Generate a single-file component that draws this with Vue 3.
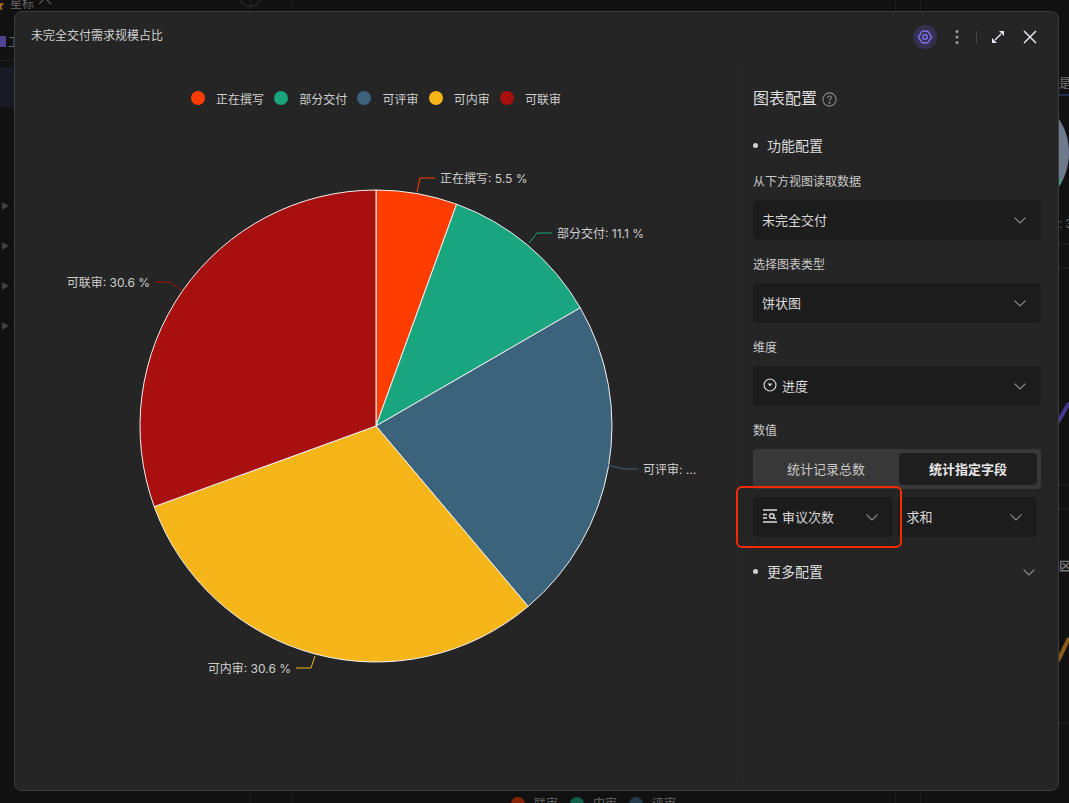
<script setup>
import { computed } from 'vue'

const cx = 376
const cy = 426
const r = 236

const slices = [
    { name: '正在撰写', pct: 5.55, color: '#ff3d00' },
    { name: '部分交付', pct: 11.1, color: '#19a67f' },
    { name: '可评审', pct: 22.2, color: '#3b637c' },
    { name: '可内审', pct: 30.6, color: '#f6b518' },
    { name: '可联审', pct: 30.55, color: '#a81010' }
]

const labels = [
    { text: '正在撰写: 5.5 %', x: 440, y: 178, anchor: 'start', line: '417,192 420,178 435,178', color: '#ff3d00' },
    { text: '部分交付: 11.1 %', x: 557, y: 233, anchor: 'start', line: '529,243 537,233 552,233', color: '#19a67f' },
    { text: '可评审: ...', x: 643, y: 469, anchor: 'start', line: '608,465 623,469 638,469', color: '#3b637c' },
    { text: '可内审: 30.6 %', x: 291, y: 668, anchor: 'end', line: '315,656 311,668 296,668', color: '#f6b518' },
    { text: '可联审: 30.6 %', x: 150, y: 282, anchor: 'end', line: '181,290 170,282 155,282', color: '#a81010' }
]

const paths = computed(() => {
    let acc = 0
    return slices.map((s) => {
        const a0 = (acc / 100) * Math.PI * 2
        acc += s.pct
        const a1 = (acc / 100) * Math.PI * 2
        const x0 = cx + r * Math.sin(a0)
        const y0 = cy - r * Math.cos(a0)
        const x1 = cx + r * Math.sin(a1)
        const y1 = cy - r * Math.cos(a1)
        const large = s.pct > 50 ? 1 : 0
        return {
            color: s.color,
            d: `M${cx} ${cy}L${x0.toFixed(2)} ${y0.toFixed(2)}A${r} ${r} 0 ${large} 1 ${x1.toFixed(2)} ${y1.toFixed(2)}Z`
        }
    })
})
</script>

<template>
    <div class="page">
        <!-- 弹窗后面露出的页面 -->
        <div class="backdrop">
            <div class="bg-star">★</div>
            <div class="bg-title">星标</div>
            <svg class="bg-up" width="14" height="10" viewBox="0 0 14 10"><path d="M1 7l6-6 6 6" fill="none" stroke="#555" stroke-width="1.3" /></svg>
            <div class="bg-tag"></div>
            <div class="bg-tag-text">工</div>
            <div class="bg-active"></div>
            <div class="bg-rule bg-rule-top"></div>
            <i class="bg-tri" v-for="t in [207, 247, 287, 327]" :key="t" :style="{ top: t - 5 + 'px' }"></i>
            <div class="bg-vline" style="left: 250px"></div>
            <div class="bg-vline" style="left: 291px"></div>
            <div class="bg-vline" style="left: 895px"></div>
            <div class="bg-vline" style="left: 920px"></div>
            <div class="bg-circle"></div>
            <div class="bg-legend">
                <span><i style="background: #8a2408"></i>联审</span>
                <span><i style="background: #12614c"></i>中审</span>
                <span><i style="background: #243b4b"></i>评审</span>
            </div>
            <svg class="bg-right" width="11" height="803" viewBox="0 0 11 803">
                <path d="M0 118C7 127 11 140 11 152C11 166 7 178 0 188Z" fill="#6f7a8c" />
                <path d="M0 188L4.5 180L0 177Z" fill="#3f9c80" />
                <path d="M0 95H11" stroke="#2c4a86" />
                <path d="M0 244H11M0 268H11M0 485H11M0 509H11M0 723H11" stroke="#222" />
                <path d="M0 422L11 403" stroke="#47368f" stroke-width="4" />
                <path d="M0 661L11 638" stroke="#8a5a16" stroke-width="4" />
            </svg>
            <div class="bg-side bg-side-a">是</div>
            <div class="bg-side bg-side-b">: 3</div>
            <div class="bg-side bg-side-c">区</div>
        </div>

        <div class="modal">
            <header class="modal-header">
                <span class="modal-title">未完全交付需求规模占比</span>
                <div class="header-tools">
                    <span class="ai-btn">
                        <svg width="16" height="16" viewBox="0 0 16 16" fill="none" stroke="#8070f0" stroke-width="1.4">
                            <path d="M5.2 2.2h5.6L14.6 8l-3.8 5.8H5.2L1.4 8Z" stroke-linejoin="round" />
                            <circle cx="8" cy="8" r="2.3" />
                        </svg>
                    </span>
                    <svg class="more" width="4" height="16" viewBox="0 0 4 16" fill="#9a9a9a">
                        <circle cx="2" cy="2.6" r="1.5" />
                        <circle cx="2" cy="8" r="1.5" />
                        <circle cx="2" cy="13.4" r="1.5" />
                    </svg>
                    <span class="tool-sep"></span>
                    <svg class="expand" width="12" height="12" viewBox="0 0 12 12" fill="#e4e4ec" stroke="#e4e4ec">
                        <path d="M7 0h5v5z" stroke="none" />
                        <path d="M0 7v5h5z" stroke="none" />
                        <path d="M9 3L3 9" stroke-width="1.5" />
                    </svg>
                    <svg class="close" width="14" height="14" viewBox="0 0 14 14" fill="none" stroke="#e4e4ec" stroke-width="1.5">
                        <path d="M1 1l12 12M13 1L1 13" />
                    </svg>
                </div>
            </header>

            <div class="modal-body">
                <section class="chart-col">
                    <div class="legend">
                        <div class="legend-item" v-for="s in slices" :key="s.name">
                            <i :style="{ background: s.color }"></i>
                            <span>{{ s.name }}</span>
                        </div>
                    </div>
                    <svg class="pie" width="722" height="670" viewBox="15 108 722 670">
                        <path v-for="p in paths" :key="p.color" :d="p.d" :fill="p.color" stroke="#f2f2f2" stroke-width="1" stroke-linejoin="round" />
                        <g v-for="l in labels" :key="l.text">
                            <polyline :points="l.line" fill="none" :stroke="l.color" stroke-width="1" />
                            <text :x="l.x" :y="l.y + 4.5" :text-anchor="l.anchor" class="pie-label">{{ l.text }}</text>
                        </g>
                    </svg>
                </section>

                <aside class="config">
                    <h3 class="config-title">
                        图表配置
                        <svg width="15" height="15" viewBox="0 0 14 14" fill="none" stroke="#8c8c8c" stroke-width="1">
                            <circle cx="7" cy="7" r="6.2" />
                            <path d="M5.2 5.6C5.2 4.5 6 3.8 7 3.8s1.8.7 1.8 1.6C8.8 6.6 7 6.6 7 8.2" />
                            <circle cx="7" cy="10" r=".5" fill="#8c8c8c" />
                        </svg>
                    </h3>

                    <div class="section-head"><i class="dot"></i>功能配置</div>

                    <label class="field-label">从下方视图读取数据</label>
                    <div class="select">
                        <span>未完全交付</span>
                        <svg class="chev" width="12" height="7" viewBox="0 0 12 7"><path d="M.6.6L6 6 11.4.6" /></svg>
                    </div>

                    <label class="field-label">选择图表类型</label>
                    <div class="select">
                        <span>饼状图</span>
                        <svg class="chev" width="12" height="7" viewBox="0 0 12 7"><path d="M.6.6L6 6 11.4.6" /></svg>
                    </div>

                    <label class="field-label">维度</label>
                    <div class="select">
                        <span class="with-icon">
                            <svg width="14" height="14" viewBox="0 0 15 15" fill="none" stroke="#dcdcdc" stroke-width="1.2">
                                <circle cx="7.5" cy="7.5" r="6.4" />
                                <path d="M5 6h5L7.5 9.2z" fill="#dcdcdc" stroke="none" />
                            </svg>
                            进度
                        </span>
                        <svg class="chev" width="12" height="7" viewBox="0 0 12 7"><path d="M.6.6L6 6 11.4.6" /></svg>
                    </div>

                    <label class="field-label">数值</label>
                    <div class="tabs">
                        <span class="tab">统计记录总数</span>
                        <span class="tab active">统计指定字段</span>
                    </div>
                    <div class="value-row">
                        <div class="select small">
                            <span class="with-icon">
                                <svg width="14" height="14" viewBox="0 0 14 14" fill="none" stroke="#dcdcdc" stroke-width="1.4">
                                    <path d="M0 1h14M0 13h14M0 5.5h4M0 9h4" />
                                    <circle cx="8.8" cy="7" r="2.3" />
                                    <path d="M10.5 8.6l2.5 1.6" />
                                </svg>
                                审议次数
                            </span>
                            <svg class="chev" width="12" height="7" viewBox="0 0 12 7"><path d="M.6.6L6 6 11.4.6" /></svg>
                        </div>
                        <div class="select small second">
                            <span>求和</span>
                            <svg class="chev" width="12" height="7" viewBox="0 0 12 7"><path d="M.6.6L6 6 11.4.6" /></svg>
                        </div>
                        <div class="highlight"></div>
                    </div>

                    <div class="section-head more-head">
                        <span class="more-left"><i class="dot"></i>更多配置</span>
                        <svg class="chev" width="12" height="7" viewBox="0 0 12 7"><path d="M.6.6L6 6 11.4.6" /></svg>
                    </div>
                </aside>
            </div>
        </div>
    </div>
</template>

<style scoped>
.page {
    position: relative;
    width: 1069px;
    height: 803px;
    overflow: hidden;
    background: #111111;
    font-family: "Liberation Sans", "Noto Sans CJK SC", sans-serif;
}

.backdrop {
    position: absolute;
    inset: 0;
    color: #6a6a6a;
    font-size: 12px;
}

.bg-star {
    position: absolute;
    left: -8px;
    top: -6px;
    color: #b07a1a;
    font-size: 13px;
}

.bg-title {
    position: absolute;
    left: 10px;
    top: -6px;
    color: #666;
}

.bg-up {
    position: absolute;
    left: 38px;
    top: -3px;
}

.bg-tag {
    position: absolute;
    left: 0;
    top: 36px;
    width: 6px;
    height: 11px;
    background: #4f4391;
}

.bg-tag-text {
    position: absolute;
    left: 8px;
    top: 33px;
    color: #666;
}

.bg-active {
    position: absolute;
    left: 0;
    top: 67px;
    width: 14px;
    height: 40px;
    background: #1a1926;
}

.bg-rule {
    position: absolute;
    left: 0;
    width: 14px;
    height: 1px;
    background: #222;
}

.bg-rule-top {
    top: 60px;
}

.bg-tri {
    position: absolute;
    left: 2px;
    width: 0;
    height: 0;
    border-left: 7px solid #3f3f3f;
    border-top: 4.5px solid transparent;
    border-bottom: 4.5px solid transparent;
}

.bg-vline {
    position: absolute;
    top: 0;
    bottom: 0;
    width: 1px;
    background: #1e1e1e;
}

.bg-circle {
    position: absolute;
    left: 238px;
    top: -17px;
    width: 22px;
    height: 22px;
    border-radius: 50%;
    border: 1px solid #333;
}

.bg-legend {
    position: absolute;
    left: 511px;
    top: 797px;
    display: flex;
    gap: 12px;
    line-height: 14px;
    color: #666;
}

.bg-legend span {
    display: flex;
    gap: 9px;
}

.bg-legend i {
    width: 14px;
    height: 14px;
    border-radius: 50%;
}

.bg-right {
    position: absolute;
    right: 0;
    top: 0;
}

.bg-side {
    position: absolute;
    left: 1059px;
    color: #777;
    line-height: 14px;
    white-space: nowrap;
}

.bg-side-a {
    top: 77px;
}

.bg-side-b {
    top: 217px;
}

.bg-side-c {
    top: 560px;
    font-weight: 700;
}

.modal {
    position: absolute;
    left: 14px;
    top: 11px;
    width: 1045px;
    height: 780px;
    box-sizing: border-box;
    display: flex;
    flex-direction: column;
    background: #252525;
    border: 1px solid #3d3d3d;
    border-radius: 8px;
    color: #d9d9d9;
}

.modal-header {
    height: 50px;
    flex: none;
    display: flex;
    align-items: center;
    justify-content: space-between;
    padding: 0 21px 0 16px;
}

.modal-title {
    font-size: 12px;
    color: #cfcfcf;
    margin-bottom: 5px;
}

.header-tools {
    display: flex;
    align-items: center;
}

.ai-btn {
    width: 24px;
    height: 24px;
    border-radius: 50%;
    background: #35304f;
    display: flex;
    align-items: center;
    justify-content: center;
}

.more {
    margin-left: 18px;
}

.tool-sep {
    width: 1px;
    height: 13px;
    background: #444;
    margin-left: 17px;
}

.expand {
    margin-left: 15px;
}

.close {
    margin-left: 19px;
}

.modal-body {
    flex: 1;
    display: flex;
    min-height: 0;
}

.chart-col {
    width: 722px;
    flex: none;
    display: flex;
    flex-direction: column;
    border-right: 1px solid #2b2b2b;
    margin-bottom: 8px;
    box-sizing: content-box;
}

.legend {
    height: 20px;
    margin-top: 26px;
    display: flex;
    justify-content: center;
    align-items: center;
    gap: 10.25px;
    font-size: 12px;
    color: #cfcfcf;
}

.legend-item {
    display: flex;
    align-items: center;
    gap: 11px;
}

.legend-item i {
    width: 14px;
    height: 14px;
    border-radius: 50%;
}

.pie {
    display: block;
}

.pie-label {
    font-family: Inter, "Noto Sans CJK SC", sans-serif;
    font-size: 12px;
    fill: #cfcfcf;
}

.config {
    flex: 1;
    min-width: 0;
    padding: 0 17px 0 15px;
}

.config-title {
    display: flex;
    align-items: center;
    gap: 5px;
    margin: 0;
    padding-top: 26px;
    height: 22px;
    box-sizing: content-box;
    font-size: 16px;
    line-height: 22px;
    font-weight: 400;
    color: #dedede;
}

.section-head {
    display: flex;
    align-items: center;
    margin-top: 25px;
    height: 20px;
    font-size: 14px;
    color: #dcdcdc;
}

.dot {
    width: 5px;
    height: 5px;
    border-radius: 50%;
    background: #d0d0d0;
    margin-right: 9px;
}

.field-label {
    display: block;
    height: 18px;
    line-height: 20px;
    margin: 0 0 10px;
    padding-top: 3px;
    font-size: 12px;
    color: #c9c9c9;
}

.section-head + .field-label {
    padding-top: 0;
    margin-top: 17px;
}

.select {
    height: 40px;
    box-sizing: border-box;
    display: flex;
    align-items: center;
    justify-content: space-between;
    padding: 0 15px 0 9px;
    margin-bottom: 12px;
    border-radius: 4px;
    background: #1c1c1c;
    font-size: 13px;
    color: #d9d9d9;
}

.select > span {
    margin-bottom: 2px;
}

.with-icon {
    display: flex;
    align-items: center;
    gap: 5px;
    padding-left: 1px;
}

.chev {
    fill: none;
    stroke: #8f8f8f;
    stroke-width: 1.2;
}

.tabs {
    height: 40px;
    box-sizing: border-box;
    display: flex;
    padding: 4px;
    border-radius: 4px;
    background: #383838;
    font-size: 13px;
}

.tab {
    flex: 1;
    margin-left: -4px;
    padding-bottom: 2px;
    display: flex;
    align-items: center;
    justify-content: center;
    border-radius: 4px;
    color: #c9c9c9;
}

.tab.active {
    flex: none;
    width: 138px;
    margin-left: 0;
    background: #1f1f1f;
    color: #e6e6e6;
    font-weight: 700;
}

.value-row {
    position: relative;
    display: flex;
    gap: 4px;
    margin-top: 8px;
    width: 284px;
}

.select.small {
    flex: 1;
    margin-bottom: 0;
}

.select.second {
    padding-left: 10px;
}

.highlight {
    position: absolute;
    left: -17px;
    top: -11px;
    width: 166px;
    height: 62px;
    box-sizing: border-box;
    border: 2.5px solid #f42c03;
    border-radius: 6px;
}

.more-head {
    justify-content: space-between;
    margin-top: 25px;
    width: 282px;
}

.more-left {
    display: flex;
    align-items: center;
    margin-bottom: 2px;
}
</style>

<style>
html, body {
    background: #111111;
}
</style>
